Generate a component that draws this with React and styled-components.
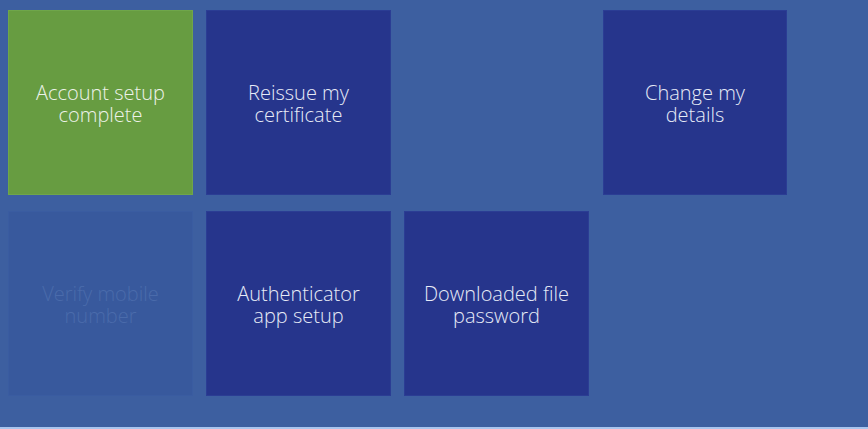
import React from 'react';
import styled, { createGlobalStyle } from 'styled-components';

const GlobalStyle = createGlobalStyle`
  html, body {
    margin: 0;
    padding: 0;
    background: #3d5fa0;
  }
  body {
    font-family: 'Open Sans', 'Liberation Sans', sans-serif;
  }
`;

const tiles = [
  { label: 'Account setup complete', tone: 'done' },
  { label: 'Reissue my certificate', tone: 'action' },
  null,
  { label: 'Change my details', tone: 'action' },
  { label: 'Verify mobile number', tone: 'disabled' },
  { label: 'Authenticator app setup', tone: 'action' },
  { label: 'Downloaded file password', tone: 'action' },
];

const tones = {
  done: { bg: '#679c41', border: '#6fa64a', color: '#eef3ea' },
  action: { bg: '#26358c', border: '#2b3d94', color: '#e6ebf7' },
  disabled: { bg: '#38599d', border: '#3a5ca1', color: '#4a6bab' },
};

export default function App() {
  return (
    <>
      <GlobalStyle />
      <Page>
        <Grid>
          {tiles.map((tile, i) =>
            tile ? (
              <Tile key={i} $tone={tile.tone}>
                <Label>{tile.label}</Label>
              </Tile>
            ) : (
              <Spacer key={i} />
            )
          )}
        </Grid>
      </Page>
    </>
  );
}

const Page = styled.div`
  height: 429px;
  box-sizing: border-box;
  padding: 10px 0 0 8px;
  border-bottom: 2px solid #a9c5ee;
  background: #3d5fa0;
`;

const Grid = styled.div`
  display: grid;
  grid-template-columns: repeat(4, 185px);
  grid-auto-rows: 185px;
  column-gap: 13px;
  row-gap: 16px;
  & > :nth-child(4n) {
    margin-left: 1px;
  }
`;

const Tile = styled.div`
  display: flex;
  align-items: center;
  justify-content: center;
  box-sizing: border-box;
  padding: 3px 12px 0;
  background: ${p => tones[p.$tone].bg};
  border: 1px solid ${p => tones[p.$tone].border};
  color: ${p => tones[p.$tone].color};
  cursor: ${p => (p.$tone === 'disabled' ? 'default' : 'pointer')};
`;

const Label = styled.span`
  max-width: 158px;
  text-align: center;
  font-size: 20px;
  font-weight: 300;
  line-height: 22px;
`;

const Spacer = styled.div``;
